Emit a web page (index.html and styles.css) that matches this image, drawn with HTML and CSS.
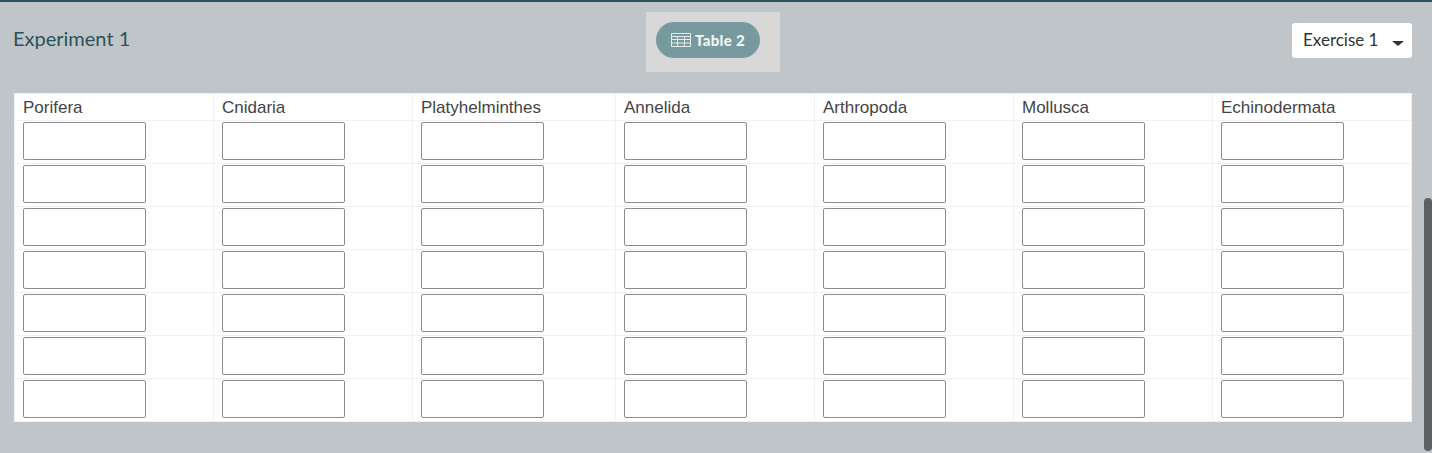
FILE: index.html
```html
<!doctype html>
<html>
<head>
    <meta name="viewport" content="width=device-width, initial-scale=1">
    <link rel="stylesheet" href="styles.css">
</head>
<body>

<div class='page'>
    <div class='top_row'>
        <h2 class='title'>Experiment 1</h2>
        <div class='tab_box'>
            <div class='pill'>
                <svg class='table_icon' width='20' height='14' viewBox='0 0 20 14'>
                    <path fill='none' stroke='#e6ecec' stroke-width='1' d='M.5 .5h19v13h-19zM.5 3.5h19M.5 6.5h19M.5 10h19M6.5 3.5v10M13.5 3.5v10'/>
                </svg>
                <span>Table 2</span>
            </div>
        </div>
        <div class='select_box'>
            <span>Exercise 1</span>
            <i class='caret'></i>
        </div>
    </div>

    <table class='grid'>
        <thead>
            <tr>
                <th>Porifera</th>
                <th>Cnidaria</th>
                <th class='wide'>Platyhelminthes</th>
                <th>Annelida</th>
                <th>Arthropoda</th>
                <th>Mollusca</th>
                <th>Echinodermata</th>
            </tr>
        </thead>
        <tbody>
            <tr><td><input></td><td><input></td><td class='wide'><input></td><td><input></td><td><input></td><td><input></td><td><input></td></tr>
            <tr><td><input></td><td><input></td><td class='wide'><input></td><td><input></td><td><input></td><td><input></td><td><input></td></tr>
            <tr><td><input></td><td><input></td><td class='wide'><input></td><td><input></td><td><input></td><td><input></td><td><input></td></tr>
            <tr><td><input></td><td><input></td><td class='wide'><input></td><td><input></td><td><input></td><td><input></td><td><input></td></tr>
            <tr><td><input></td><td><input></td><td class='wide'><input></td><td><input></td><td><input></td><td><input></td><td><input></td></tr>
            <tr><td><input></td><td><input></td><td class='wide'><input></td><td><input></td><td><input></td><td><input></td><td><input></td></tr>
            <tr><td><input></td><td><input></td><td class='wide'><input></td><td><input></td><td><input></td><td><input></td><td><input></td></tr>
        </tbody>
    </table>
</div>

<div class='scroll_thumb'></div>

</body>
</html>
```

FILE: styles.css
```css
html, body {
    margin: 0;
    height: 100%;
    overflow: hidden;
}

body {
    background-color: #bfc5c8;
    font-family: "Liberation Sans", sans-serif;
}

.page {
    border-top: 2px solid #2b525a;
    padding: 0 20px 0 14px;
}

.top_row {
    display: flex;
    align-items: flex-start;
    height: 91px;
}

.title {
    margin: 0;
    margin-top: 24px;
    margin-left: -1px;
    width: 633px;
    font-family: Lato, sans-serif;
    font-size: 20px;
    line-height: 24px;
    font-weight: 400;
    color: #2b525a;
}

.tab_box {
    margin-top: 10px;
    width: 134px;
    height: 60px;
    padding: 10px;
    box-sizing: border-box;
    background-color: #d8d8d8;
}

.pill {
    display: flex;
    align-items: center;
    gap: 4px;
    width: 104px;
    height: 36px;
    padding-left: 15px;
    box-sizing: border-box;
    border-radius: 18px;
    background-color: #769a9e;
    color: #f2f5f5;
    font-family: Lato, sans-serif;
    font-size: 15px;
    letter-spacing: 0.3px;
    font-weight: 900;
}

.select_box {
    display: flex;
    align-items: center;
    justify-content: space-between;
    margin-top: 21px;
    margin-left: auto;
    width: 120px;
    height: 35px;
    padding: 0 8px 2px 11px;
    box-sizing: border-box;
    border-radius: 3px;
    background-color: #fff;
    color: #333;
    font-family: Lato, sans-serif;
    font-size: 17px;
}

.caret {
    margin-top: 7px;
    border-top: 5px solid #333;
    border-left: 6px solid transparent;
    border-right: 6px solid transparent;
}

.grid {
    width: 1398px;
    table-layout: fixed;
    border-collapse: collapse;
    background-color: #fff;
    color: #444;
}

th, td {
    width: 199px;
    padding: 0 8px;
    box-sizing: border-box;
    border: 1px solid #f1f1f1;
    text-align: left;
}

th.wide, td.wide {
    width: 203px;
}

th {
    height: 27px;
    padding-top: 2px;
    font-size: 17px;
    font-weight: 400;
}

td {
    height: 43px;
    padding-top: 1px;
    vertical-align: top;
}

input {
    display: block;
    width: 123px;
    height: 38px;
    padding: 0;
    box-sizing: border-box;
    border: 1px solid #8c8c8c;
    border-radius: 2px;
    background-color: #fff;
}

.scroll_thumb {
    position: absolute;
    top: 198px;
    right: 0;
    width: 8px;
    height: 253px;
    border-radius: 4px;
    background-color: #5c6061;
}
```
